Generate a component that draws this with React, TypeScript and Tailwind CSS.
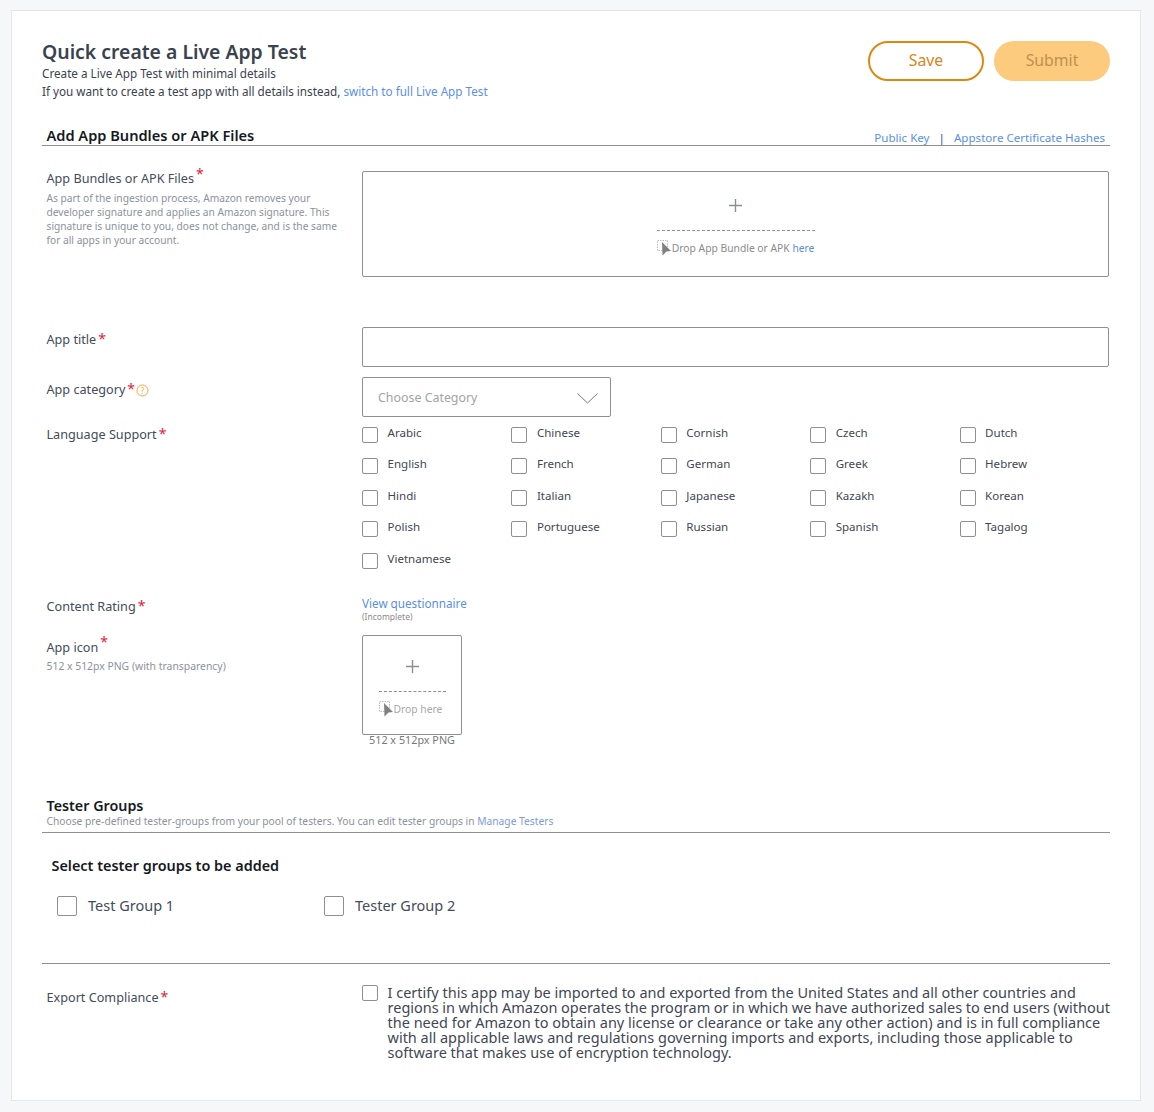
const LANGUAGES = [
  "Arabic", "Chinese", "Cornish", "Czech", "Dutch",
  "English", "French", "German", "Greek", "Hebrew",
  "Hindi", "Italian", "Japanese", "Kazakh", "Korean",
  "Polish", "Portuguese", "Russian", "Spanish", "Tagalog",
  "Vietnamese",
];

function Label({ text, starClass = "top-0", className = "" }: { text: string; starClass?: string; className?: string }) {
  return (
    <div className={`text-[12.65px] leading-[18px] text-[#444c59] ${className}`}>
      {text}
      <span className={`ml-[2px] text-[#e31c3d] text-[14px] leading-none relative ${starClass}`}>*</span>
    </div>
  );
}

function DropIcon() {
  return (
    <svg width="15" height="16" viewBox="0 0 15 16" className="shrink-0">
      <rect x="0.5" y="0.5" width="10" height="10" fill="none" stroke="#bbb" strokeWidth="1" strokeDasharray="1.5 1" />
      <path d="M5 2 L14 11 L9.5 11.5 L5.5 15.5 Z" fill="#808080" />
    </svg>
  );
}

function Plus() {
  return (
    <svg width="13" height="13" viewBox="0 0 13 13">
      <path d="M6.5 0 V13 M0 6.5 H13" stroke="#8a8f94" strokeWidth="1.4" />
    </svg>
  );
}

export default function App() {
  return (
    <div className="min-h-[1112px] bg-[#f6f7f8] pt-[10px] pl-[11px] pr-[13px] font-['Noto_Sans','Open_Sans',sans-serif]">
      <div className="h-[1091px] border border-[#e6e6e6] bg-white pl-[30px] pr-[30px] pt-[30px]">
        {/* page header */}
        <div className="flex justify-between">
          <div>
            <h1 className="-mt-[1px] text-[19.4px] leading-[24px] font-semibold text-[#3a424e]">Quick create a Live App Test</h1>
            <p className="text-[11.7px] leading-[18px] text-[#3a424e]">Create a Live App Test with minimal details</p>
            <p className="text-[11.7px] leading-[18px] text-[#3a424e]">
              If you want to create a test app with all details instead,{" "}
              <a className="text-[#5a8fe8]">switch to full Live App Test</a>
            </p>
          </div>
          <div className="flex gap-[10px]">
            <button className="w-[116px] h-[40px] rounded-[20px] border-2 border-[#dc8a0e] text-[15.8px] text-[#d9841a]">Save</button>
            <button className="w-[116px] h-[40px] rounded-[20px] bg-[#fdcb7d] text-[15.8px] text-[#c08f52]">Submit</button>
          </div>
        </div>

        {/* app files */}
        <div className="mt-[26px] flex items-end justify-between border-b border-[#8f8f8f] pl-[4.5px] pr-[5px] h-[20px]">
          <h2 className="text-[14.6px] leading-[20px] font-semibold text-[#16191f]">Add App Bundles or APK Files</h2>
          <div className="-mb-[1px] text-[11.6px] leading-[16px] text-[#5a8fe8]">
            Public Key<span className="mx-[9px] text-[#1b4f8f]">|</span>Appstore Certificate Hashes
          </div>
        </div>

        <div className="mt-[25px] grid grid-cols-[316px_746px] pl-[4.5px]">
          <div>
            <Label text="App Bundles or APK Files" starClass="-top-[4px]" className="-mt-[2px]" />
            <p className="mt-[4px] w-[296px] text-[10.2px] leading-[14px] text-[#8b929b]">
              As part of the ingestion process, Amazon removes your developer signature and applies an Amazon signature. This signature is unique to you, does not change, and is the same for all apps in your account.
            </p>
          </div>
          <div className="-ml-[0.5px] h-[106px] rounded-[2px] border border-[#8f8f8f] flex flex-col items-center pt-[27px]">
            <Plus />
            <div className="mt-[18px] ml-[1px] w-[158px] border-t border-dashed border-[#8f8f8f]" />
            <div className="mt-[9px] ml-[1px] flex w-[158px] whitespace-nowrap text-[10.3px] leading-[16px] text-[#8b8b8b]">
              <DropIcon />
              <span>Drop App Bundle or APK <span className="text-[#5a8fe8]">here</span></span>
            </div>
          </div>
        </div>

        <div className="mt-[50px] grid grid-cols-[316px_746px] pl-[4.5px]">
          <Label text="App title" className="pt-[3px]" />
          <div className="-ml-[0.5px] h-[40px] rounded-[2px] border border-[#8f8f8f]" />
        </div>

        <div className="mt-[10px] grid grid-cols-[316px_746px] pl-[4.5px]">
          <div className="flex items-start pt-[3px]">
            <Label text="App category" />
            <svg width="13" height="13" viewBox="0 0 13 13" className="ml-[1px] mt-[4px]">
              <circle cx="6.5" cy="6.5" r="5.5" fill="none" stroke="#f5a83a" strokeWidth="1" />
              <text x="6.5" y="9.5" textAnchor="middle" fontSize="8" fill="#f5a83a">?</text>
            </svg>
          </div>
          <div className="-ml-[0.5px] w-[249px] h-[40px] rounded-[2px] border border-[#8f8f8f] flex items-center justify-between pl-[15px] pr-[12px]">
            <span className="mt-[2px] text-[12.4px] text-[#a3a3a3]">Choose Category</span>
            <svg width="21" height="11" viewBox="0 0 21 11" className="mt-[2px]">
              <path d="M0.5 0.5 L10.5 10 L20.5 0.5" fill="none" stroke="#777" strokeWidth="1" />
            </svg>
          </div>
        </div>

        <div className="mt-[9px] grid grid-cols-[316px_746px] pl-[4.5px]">
          <Label text="Language Support" className="-mt-[1px]" />
          <div className="-ml-[0.5px] grid grid-cols-[repeat(5,149.4px)] auto-rows-[31.4px]">
            {LANGUAGES.map((lang) => (
              <div key={lang} className="flex items-start gap-[9.5px]">
                <span className="mt-[1px] w-[16px] h-[16px] rounded-[2px] border border-[#8f8f8f]" />
                <span className="text-[11.55px] leading-[14px] text-[#3f4754]">{lang}</span>
              </div>
            ))}
          </div>
        </div>

        <div className="mt-[13px] grid grid-cols-[316px_746px] pl-[4.5px]">
          <Label text="Content Rating" className="pt-[1px]" />
          <div className="-ml-[0.5px] -mt-[1px]">
            <a className="block text-[11.7px] leading-[16px] text-[#5a8fe8]">View questionnaire</a>
            <div className="text-[8.5px] leading-[11px] text-[#8b8b8b]">(Incomplete)</div>
          </div>
        </div>

        <div className="mt-[13px] grid grid-cols-[316px_746px] pl-[4.5px]">
          <div className="pt-[3px]">
            <Label text="App icon" starClass="-top-[5px]" />
            <p className="mt-[3px] text-[10.4px] leading-[14px] text-[#8b929b]">512 x 512px PNG (with transparency)</p>
          </div>
          <div className="-ml-[0.5px] w-[100px]">
            <div className="h-[100px] rounded-[2px] border border-[#8f8f8f] flex flex-col items-center pt-[24px]">
              <Plus />
              <div className="mt-[18px] w-[67px] border-t border-dashed border-[#8f8f8f]" />
              <div className="mt-[9px] flex w-[67px] whitespace-nowrap text-[10.3px] leading-[16px] text-[#a8a8a8]">
                <DropIcon />
                <span>Drop here</span>
              </div>
            </div>
            <div className="-mt-[1px] -ml-[5px] -mr-[5px] text-center text-[10.8px] leading-[12px] text-[#777] whitespace-nowrap">512 x 512px PNG</div>
          </div>
        </div>

        {/* tester groups */}
        <div className="mt-[51px] border-b border-[#8f8f8f] pl-[4.5px] pb-[5px]">
          <h2 className="text-[14.3px] leading-[18px] font-semibold text-[#16191f]">Tester Groups</h2>
          <p className="text-[10.24px] leading-[12px] text-[#8b929b]">
            Choose pre-defined tester-groups from your pool of testers. You can edit tester groups in{" "}
            <span className="text-[#7d9bd6]">Manage Testers</span>
          </p>
        </div>
        <h3 className="mt-[23px] pl-[9.5px] text-[14.4px] leading-[20px] font-semibold text-[#16191f]">Select tester groups to be added</h3>
        <div className="mt-[20px] pl-[15px] flex">
          <div className="w-[267px] flex items-start gap-[11px]">
            <span className="w-[20px] h-[20px] rounded-[2px] border border-[#8f8f8f]" />
            <span className="text-[14.5px] leading-[18px] text-[#444c59]">Test Group 1</span>
          </div>
          <div className="flex items-start gap-[11px]">
            <span className="w-[20px] h-[20px] rounded-[2px] border border-[#8f8f8f]" />
            <span className="text-[14.5px] leading-[18px] text-[#444c59]">Tester Group 2</span>
          </div>
        </div>
        <div className="mt-[47px] border-t border-[#8f8f8f]" />

        {/* export compliance */}
        <div className="mt-[21px] grid grid-cols-[316px_746px] pl-[4.5px]">
          <Label text="Export Compliance" className="pt-[3px]" />
          <div className="-ml-[0.5px] flex items-start gap-[9.5px]">
            <span className="shrink-0 w-[16px] h-[16px] rounded-[2px] border border-[#8f8f8f]" />
            <p className="whitespace-nowrap text-[14.5px] leading-[15px] text-[#3f4754]">
              I certify this app may be imported to and exported from the United States and all other countries and<br />
              <span className="[word-spacing:-0.25px]">regions in which Amazon operates the program or in which we have authorized sales to end users (without</span><br />
              the need for Amazon to obtain any license or clearance or take any other action) and is in full compliance<br />
              with all applicable laws and regulations governing imports and exports, including those applicable to<br />
              software that makes use of encryption technology.
            </p>
          </div>
        </div>
      </div>
    </div>
  );
}
